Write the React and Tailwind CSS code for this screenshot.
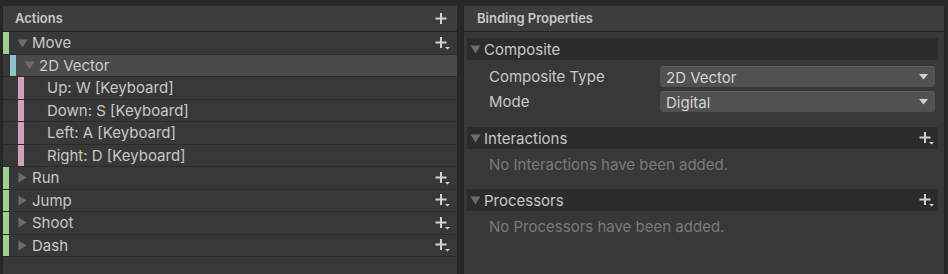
import { Fragment } from "react";

const font = { fontFamily: "Inter, 'Noto Sans', sans-serif" };

const PlusIcon = ({ drop = true }) => (
  <svg width="18" height="16" viewBox="0 0 18 16" className="shrink-0">
    <path d="M7 2v11M1.5 7.5h11" stroke="#d2d2d2" strokeWidth="2" />
    {drop && <path d="M11 12h5l-2.5 2.5z" fill="#d2d2d2" />}
  </svg>
);

const Tri = ({ open }) =>
  open ? (
    <svg width="11" height="10" viewBox="0 0 11 10" className="shrink-0">
      <path d="M0.5 1.5h10L5.5 9.5z" fill="#6c6c6c" />
    </svg>
  ) : (
    <svg width="10" height="11" viewBox="0 0 10 11" className="shrink-0">
      <path d="M1.5 0.5v10L9.5 5.5z" fill="#6c6c6c" />
    </svg>
  );

const actions = [
  { name: "Move", open: true },
  { name: "Run" },
  { name: "Jump" },
  { name: "Shoot" },
  { name: "Dash" },
];

const bindings = ["Up: W [Keyboard]", "Down: S [Keyboard]", "Left: A [Keyboard]", "Right: D [Keyboard]"];

const ActionRow = ({ name, open }) => (
  <div className="h-[22.5px] border-b border-[#2b2b2b] flex items-stretch">
    <div className="w-[6px] bg-[#9fd08f]" />
    <div className={`flex items-center pl-[8px] flex-1 ${open ? "gap-[4px]" : "gap-[5px]"}`}>
      <Tri open={open} />
      <span className="text-[15px] text-[#c8c8c8] leading-none">{name}</span>
    </div>
    <div className="flex items-center pr-[5px]">
      <PlusIcon />
    </div>
  </div>
);

const Foldout = ({ title, plus, children }) => (
  <div>
    <div className="h-[22px] bg-[#2c2c2c] flex items-center pl-[3px] pr-[2px] gap-[3px]">
      <Tri open />
      <span className="text-[15px] text-[#c8c8c8] leading-none flex-1">{title}</span>
      {plus && <PlusIcon />}
    </div>
    {children}
  </div>
);

const Dropdown = ({ label, value }) => (
  <div className="flex items-center h-[21px]">
    <span className="w-[193px] pl-[22px] text-[15px] text-[#c8c8c8] leading-none">{label}</span>
    <div className="flex-1 h-full mr-[3px] bg-[#515151] rounded-[3px] border-t border-[#5d5d5d] flex items-center pl-[6px] pr-[7px]">
      <span className="flex-1 text-[15px] text-[#d4d4d4] leading-none">{value}</span>
      <svg width="9" height="6" viewBox="0 0 9 6">
        <path d="M0 0h9L4.5 5.5z" fill="#d0d0d0" />
      </svg>
    </div>
  </div>
);

export default function App() {
  return (
    <div style={font} className="w-[948px] h-[274px] bg-[#282828] flex pt-[6px] overflow-hidden">
      <div className="ml-[2px] w-[455px] border-l border-[#232323] bg-[#383838] flex flex-col">
        <div className="h-[26px] bg-[#3d3d3d] border-b border-[#232323] flex items-center pl-[12px] pr-[5px]">
          <span className="flex-1 text-[13px] font-semibold text-[#c8c8c8]">Actions</span>
          <PlusIcon drop={false} />
        </div>
        {actions.map((a) => (
          <Fragment key={a.name}>
            <ActionRow {...a} />
            {a.open && (
              <>
                <div className="h-[22.5px] border-b border-[#2b2b2b] flex items-stretch">
                  <div className="w-[7px]" />
                  <div className="w-[6px] bg-[#8fc3cc]" />
                  <div className="flex-1 bg-[#4a4a4a] flex items-center pl-[8px] gap-[4px]">
                    <Tri open />
                    <span className="text-[15px] text-[#c8c8c8] leading-none">2D Vector</span>
                  </div>
                </div>
                {bindings.map((b) => (
                  <div key={b} className="h-[22.5px] border-b border-[#2b2b2b] flex items-stretch">
                    <div className="w-[15px]" />
                    <div className="w-[6px] bg-[#d49fba]" />
                    <div className="flex items-center pl-[23px]">
                      <span className="text-[15px] text-[#c8c8c8] leading-none">{b}</span>
                    </div>
                  </div>
                ))}
              </>
            )}
          </Fragment>
        ))}
      </div>
      <div className="ml-[6px] w-[482px] border-l border-r border-[#232323] bg-[#383838] flex flex-col">
        <div className="h-[26px] bg-[#3d3d3d] border-b border-[#232323] flex items-center pl-[13px]">
          <span className="text-[13px] font-semibold text-[#c8c8c8]">Binding Properties</span>
        </div>
        <div className="pt-[6px] pl-[3px] pr-[6px] flex flex-col">
          <Foldout title="Composite">
            <div className="pt-[6px] pb-[15px] flex flex-col gap-[4px]">
              <Dropdown label="Composite Type" value="2D Vector" />
              <Dropdown label="Mode" value="Digital" />
            </div>
          </Foldout>
          <Foldout title="Interactions" plus>
            <div className="h-[40px] pl-[22px] pt-[3px]">
              <span className="text-[15px] text-[#7a7a7a]">No Interactions have been added.</span>
            </div>
          </Foldout>
          <Foldout title="Processors" plus>
            <div className="h-[40px] pl-[22px] pt-[3px]">
              <span className="text-[15px] text-[#7a7a7a]">No Processors have been added.</span>
            </div>
          </Foldout>
        </div>
      </div>
    </div>
  );
}
